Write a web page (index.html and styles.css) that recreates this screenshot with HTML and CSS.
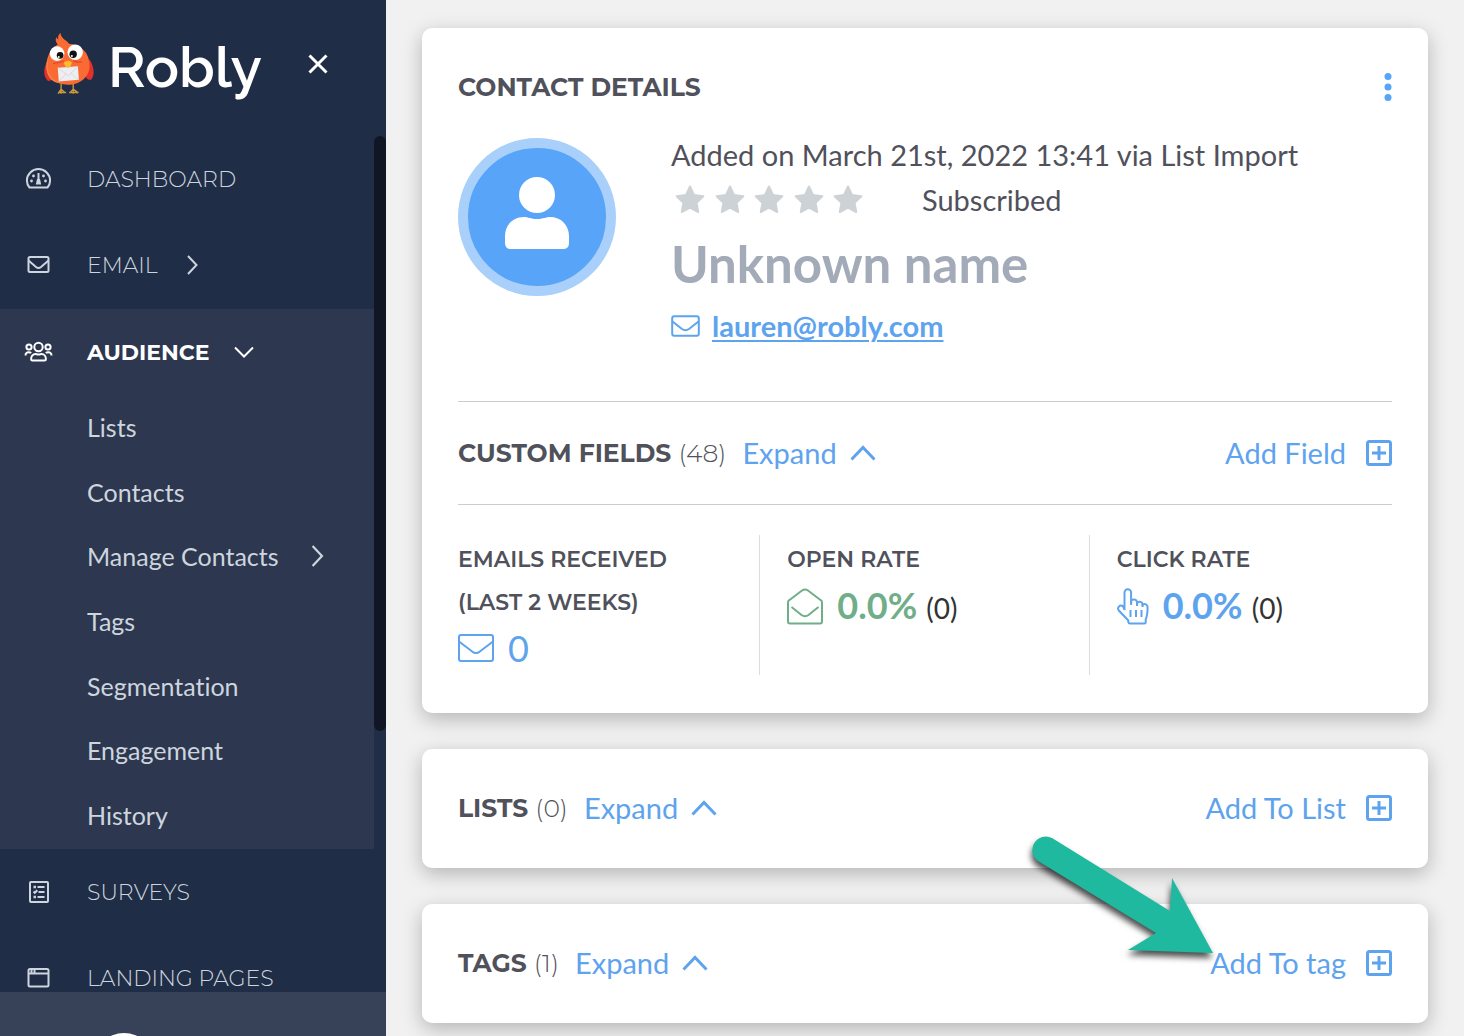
FILE: index.html
```html
<!DOCTYPE html>
<html lang="en">
  <head>
    <meta charset="UTF-8" />
    <meta name="viewport" content="width=device-width, initial-scale=1.0" />
    <title>Robly - Contact Details</title>
    <link rel="stylesheet" href="styles.css">
  </head>
  <body>
    <svg class="sprite" aria-hidden="true">
      <symbol id="chevron" viewBox="0 0 12 20">
        <path d="M2 1l8.500 9L2 19" />
      </symbol>
      <symbol id="chevron-up" viewBox="0 0 26 16">
        <path d="M1.500 14.500L13 2.500l11.500 12" />
      </symbol>
      <symbol id="plus-box" viewBox="0 0 26 26">
        <rect x="1.500" y="1.500" width="23" height="23" rx="2" />
        <path d="M13 6v14M6 13h14" />
      </symbol>
      <symbol id="star" viewBox="0 0 30 29">
        <path d="M15 1.500l4 8.500 9.300 1.300-6.700 6.500L23.200 27l-8.200-4.300L6.800 27l1.600-9.200-6.700-6.500L11 10z" />
      </symbol>
    </svg>

    <div class="page">
      <aside class="sidebar">
        <div class="sidebar-header">
          <a class="logo" href="#">
            <svg class="bird" viewBox="40 25 155 190" aria-hidden="true">
              <path d="M94 195v-16M85 205h24M94 195l-9 13M94 195v14M94 195l12 11M130 195v-16M118 205h28M130 195l-10 11M130 195v14M130 195l15 11" fill="none" stroke="#c99a3c" stroke-width="4" />
              <path d="M56 108c-14 18-18 46-2 62 8 2 16-4 20-14z" fill="#e0312b" />
              <path d="M178 106c14 20 18 46 5 61-9 2-16-6-18-16z" fill="#e0312b" />
              <path d="M118 60c-8-12-24-14-26-33-8 8-8 14-6 20-4-2-6-5-6-8-4 10-2 16 4 23-22 12-34 38-34 65 0 32 28 55 64 55s65-23 65-57c0-36-24-62-61-65z" fill="#f96b32" />
              <path d="M58 100c-8 28-6 62 36 78-28-2-44-22-44-50 0-12 3-20 8-28z" fill="#fb8046" />
              <circle cx="82" cy="89" r="22" fill="#fff" />
              <circle cx="136" cy="85" r="23" fill="#fff" />
              <circle cx="91" cy="94" r="10" fill="#111" />
              <circle cx="130" cy="91" r="11" fill="#111" />
              <circle cx="87" cy="99" r="3" fill="#fff" />
              <circle cx="126" cy="96" r="3" fill="#fff" />
              <path d="M70 118q18 0 32-7M130 111q14 6 26 2" fill="none" stroke="#e0482b" stroke-width="4" />
              <path d="M84 131l60-4 3 40-60 5z" fill="#eceef1" />
              <path d="M84 131l32 24 28-28M87 172l22-23M147 167l-25-20" fill="none" stroke="#cfd1d5" stroke-width="2" />
              <path d="M102 118c4-10 18-10 24-2-2 10-8 16-12 16s-9-7-12-14z" fill="#fcb932" />
            </svg>
            <span>Robly</span>
          </a>
          <button class="close" type="button" aria-label="Close menu">
            <svg width="20" height="20" viewBox="0 0 20 20"><path d="M1.500 1.500l17 17M18.500 1.500l-17 17" /></svg>
          </button>
        </div>

        <nav class="nav">
          <a class="nav-item" href="#">
            <svg class="nav-icon" viewBox="0 0 28 28">
              <path d="M5 22.500h18c1.800-2 2.600-4.500 2.600-7a11.600 11.400 0 0 0-23.200 0c0 2.500.8 5 2.600 7z" />
              <path d="M14 8v9" />
              <path class="fill" d="M12.500 14h3l1.200 5.500h-5.400z" />
              <g class="fill"><circle cx="9" cy="11" r="1.400" /><circle cx="19" cy="11" r="1.400" /><circle cx="7" cy="16" r="1.400" /><circle cx="21" cy="16" r="1.400" /></g>
            </svg>
            Dashboard
          </a>
          <a class="nav-item" href="#">
            <svg class="nav-icon" viewBox="0 0 28 28">
              <rect x="4" y="6" width="20" height="15" rx="1.500" />
              <path d="M4 9.500l7.500 6.500q2.500 2 5 0L24 9.500" />
            </svg>
            Email
            <svg class="chevron" width="12" height="20"><use href="#chevron" /></svg>
          </a>
          <div class="nav-group">
            <a class="nav-item active" href="#">
              <svg class="nav-icon" viewBox="0 0 28 28">
                <circle cx="14" cy="9" r="4.200" />
                <circle cx="4.500" cy="9" r="2.600" />
                <circle cx="23.500" cy="9" r="2.600" />
                <path d="M8 22.500h12c1.200 0 1.400-.6 1.400-1.500 0-3-2-5-4.400-5-1 0-1.500.5-3 .5s-2-.5-3-.5c-2.400 0-4.400 2-4.400 5 0 .9.200 1.500 1.400 1.500z" />
                <path d="M1 17.500c0-2 1.200-3.300 3.200-3.300 1 0 1.800.2 2.500.8M27 17.500c0-2-1.200-3.300-3.200-3.300-1 0-1.800.2-2.500.8" />
              </svg>
              Audience
              <svg class="chevron" width="20" height="12" viewBox="0 0 20 12"><path d="M1 1.500l9 9 9-9" /></svg>
            </a>
            <ul class="submenu">
              <li><a href="#">Lists</a></li>
              <li><a href="#">Contacts</a></li>
              <li>
                <a href="#">Manage Contacts <svg class="chevron" width="14" height="22"><use href="#chevron" /></svg></a>
              </li>
              <li><a href="#">Tags</a></li>
              <li><a href="#">Segmentation</a></li>
              <li><a href="#">Engagement</a></li>
              <li><a href="#">History</a></li>
            </ul>
          </div>
          <a class="nav-item" href="#">
            <svg class="nav-icon" viewBox="0 0 28 28">
              <rect x="5.500" y="4" width="18" height="20" rx="1" />
              <path d="M13 9h7M14 14h6M13 19h7M9 13.500l1.300 1.300 2.500-2.600" />
              <path class="fill" d="M9 7.800h2.500v2.500H9zM9 17.800h2.500v2.500H9z" />
            </svg>
            Surveys
          </a>
          <a class="nav-item" href="#">
            <svg class="nav-icon" viewBox="0 0 28 28">
              <rect x="4" y="5" width="20" height="17.500" rx="1.500" />
              <path d="M4 9.500h20M7 5v4M10 5v4" />
            </svg>
            Landing Pages
          </a>
          <div class="scroll-thumb"></div>
        </nav>

        <div class="sidebar-footer">
          <div class="user-circle"></div>
        </div>
      </aside>

      <main class="content">
        <section class="card details">
          <div class="card-header">
            <h2>Contact Details</h2>
            <button class="more" type="button" aria-label="More options">
              <svg width="8" height="28" viewBox="0 0 8 28"><circle cx="4" cy="3.500" r="3.500" /><circle cx="4" cy="14" r="3.500" /><circle cx="4" cy="24.500" r="3.500" /></svg>
            </button>
          </div>

          <div class="contact">
            <div class="avatar">
              <svg width="64" height="74" viewBox="0 0 64 74">
                <circle cx="32" cy="19" r="18" />
                <path d="M19 41c4 0 7 2 13 2s9-2 13-2c11 0 19 8 19 19v7q0 6-6 6H6q-6 0-6-6v-7c0-11 8-19 19-19z" />
              </svg>
            </div>
            <div class="contact-info">
              <p>Added on March 21st, 2022 13:41 via List Import</p>
              <div class="status">
                <span class="stars" role="img" aria-label="No rating">
                  <svg><use href="#star" /></svg>
                  <svg><use href="#star" /></svg>
                  <svg><use href="#star" /></svg>
                  <svg><use href="#star" /></svg>
                  <svg><use href="#star" /></svg>
                </span>
                <span>Subscribed</span>
              </div>
              <h1>Unknown name</h1>
              <div class="email">
                <svg width="29" height="22" viewBox="0 0 29 22">
                  <rect x="1.200" y="1.200" width="26.600" height="19.600" rx="2" />
                  <path d="M1.500 6.500l9.500 7.500q3.500 2.500 7 0l9.500-7.500" />
                </svg>
                <a href="mailto:lauren@robly.com">lauren@robly.com</a>
              </div>
            </div>
          </div>

          <div class="row fields">
            <h2>Custom Fields <small>(48)</small></h2>
            <button class="link" type="button">Expand <svg width="26" height="16"><use href="#chevron-up" /></svg></button>
            <button class="link add" type="button">Add Field <svg width="26" height="26"><use href="#plus-box" /></svg></button>
          </div>

          <div class="stats">
            <div class="stat">
              <h3>Emails Received<br>(Last 2 Weeks)</h3>
              <div class="value blue">
                <svg width="36" height="28" viewBox="0 0 36 28">
                  <rect x="1" y="1" width="34" height="26" rx="2" />
                  <path d="M1 7.500l13.500 10.300q3.500 2.200 7 0L35 7.500" />
                </svg>
                <span>0</span>
              </div>
            </div>
            <div class="stat">
              <h3>Open Rate</h3>
              <div class="value green">
                <svg width="36" height="37" viewBox="0 0 36 37">
                  <path d="M1 14.500v19q0 2 2 2h30q2 0 2-2v-19q0-1.500-1.200-2.300L21 2.500q-3-2-6 0L2.200 12.200Q1 13 1 14.500z" />
                  <path d="M4.500 19l10 8q3.500 2.500 7 0l10-8" />
                </svg>
                <span><strong>0.0%</strong> <small>(0)</small></span>
              </div>
            </div>
            <div class="stat">
              <h3>Click Rate</h3>
              <div class="value blue">
                <svg width="32" height="37" viewBox="0 0 32 37">
                  <path d="M7.500 22V4.500a3.300 3.300 0 0 1 6.600 0V15v-2c1.500-2.300 5.500-1.800 6 1v1c1.500-2 5-1.500 5.500 1v.8c2-1.500 5-.3 5 2.200 0 5-.4 9-1.900 12.500V34q0 1.500-1.500 1.500H13q-1.500 0-1.700-1.500v-1.500L1.800 22.500c-2-2.500.8-6.500 4.200-4.300z" />
                  <path d="M14.100 13v4M20.100 14v4M25.600 16v3M13.500 22v7M19 22v7M24.500 22v7" />
                </svg>
                <span><strong>0.0%</strong> <small>(0)</small></span>
              </div>
            </div>
          </div>
        </section>

        <section class="card row">
          <h2>Lists <small>(0)</small></h2>
          <button class="link" type="button">Expand <svg width="26" height="16"><use href="#chevron-up" /></svg></button>
          <button class="link add" type="button">Add To List <svg width="26" height="26"><use href="#plus-box" /></svg></button>
        </section>

        <section class="card row">
          <h2>Tags <small>(1)</small></h2>
          <button class="link" type="button">Expand <svg width="26" height="16"><use href="#chevron-up" /></svg></button>
          <button class="link add" type="button">Add To tag <svg width="26" height="26"><use href="#plus-box" /></svg></button>
          <svg class="arrow" width="200" height="140" viewBox="0 0 200 140" aria-hidden="true">
            <path d="M28 8l118 73 2-33 41 75-85-3 28-17L14 31A13.500 13.500 0 0 1 28 8z" />
          </svg>
        </section>
      </main>
    </div>
  </body>
</html>
```
FILE: styles.css
```css
* {
  box-sizing: border-box;
}
body {
  margin: 0;
  font-family: Lato, "Liberation Sans", sans-serif;
  font-size: 29px;
  font-variant-ligatures: none;
  color: #50515b;
  background: #f1f1f1;
}
h1,
h2,
h3,
p,
ul {
  margin: 0;
  padding: 0;
}
button {
  padding: 0;
  border: 0;
  background: none;
  font: inherit;
  cursor: pointer;
}
a {
  color: inherit;
  text-decoration: none;
}
svg {
  display: block;
  flex: none;
  fill: none;
  stroke: currentColor;
  stroke-width: 2;
}
.sprite {
  position: absolute;
  width: 0;
  height: 0;
}
.page {
  display: flex;
  height: 100vh;
  overflow: hidden;
}

/* sidebar */
.sidebar {
  display: flex;
  flex-direction: column;
  flex: none;
  width: 386px;
  background: #202d46;
  color: #cdd5de;
}
.sidebar-header {
  display: flex;
  align-items: center;
  flex: none;
  height: 136px;
  padding: 0 58px 8px 43px;
  color: #fff;
}
.logo {
  display: flex;
  align-items: center;
  gap: 13px;
  font-family: Raleway, Lato, sans-serif;
  font-size: 57px;
  font-weight: 600;
  line-height: 68px;
}
.logo span {
  padding-top: 6px;
}
.bird {
  width: 52px;
  height: 64px;
  stroke: none;
}
.close {
  margin-left: auto;
  color: #fff;
}
.close svg {
  stroke-width: 3;
}
.nav {
  position: relative;
  flex: 1;
  min-height: 0;
  padding-right: 12px;
  overflow: hidden;
}
.nav-item {
  display: flex;
  align-items: center;
  height: 86px;
  padding-left: 24px;
  font-family: Montserrat, Inter, sans-serif;
  font-size: 22px;
  font-weight: 300;
  text-transform: uppercase;
}
.nav-icon {
  width: 29px;
  height: 28px;
  margin-right: 34px;
}
.fill {
  fill: currentColor;
  stroke: none;
}
.chevron {
  margin-left: 28px;
}
.nav-group {
  margin-top: 1px;
  background: #2d3850;
}
.nav-item.active {
  color: #fff;
  font-weight: 700;
}
.nav-item.active .chevron {
  margin-left: 25px;
}
.submenu {
  display: grid;
  grid-auto-rows: 1fr;
  height: 454px;
  padding: 0 0 2px 87px;
  font-size: 25px;
  list-style: none;
}
.submenu a {
  display: flex;
  align-items: center;
  height: 100%;
}
.submenu .chevron {
  margin-left: 31px;
}
.scroll-thumb {
  position: absolute;
  top: 0;
  right: 0;
  width: 12px;
  height: 595px;
  border-radius: 6px;
  background: #101623;
}
.sidebar-footer {
  flex: none;
  height: 44px;
  padding: 41px 0 0 94px;
  background: #374259;
  overflow: hidden;
}
.user-circle {
  width: 60px;
  height: 60px;
  border-radius: 50%;
  background: #fff;
}

/* content */
.content {
  display: flex;
  flex-direction: column;
  flex: 1;
  gap: 36px;
  padding: 28px 36px;
}
.card {
  position: relative;
  flex: none;
  padding: 36px 36px 37px;
  border-radius: 10px;
  background: #fff;
  box-shadow: 0 6px 20px rgba(0, 0, 0, 0.25);
}
.details {
  padding-bottom: 38px;
}
.card-header {
  display: flex;
  justify-content: space-between;
  align-items: center;
  height: 46px;
}
h2 {
  font-family: Montserrat, Inter, sans-serif;
  font-size: 25px;
  font-weight: 700;
  line-height: 46px;
  text-transform: uppercase;
}
h2 small {
  font-size: 25px;
  font-weight: 300;
}
.more {
  color: #58a4f8;
}
.more svg {
  fill: currentColor;
  stroke: none;
}
.contact {
  display: flex;
  gap: 55px;
  height: 291px;
  padding-top: 22px;
}
.avatar {
  display: flex;
  justify-content: center;
  flex: none;
  width: 158px;
  height: 158px;
  margin-top: 6px;
  padding-top: 28px;
  border: 10px solid #a9d0fb;
  border-radius: 50%;
  background: #58a4f8;
}
.avatar svg {
  fill: #fff;
  stroke: none;
}
.contact-info {
  line-height: 45px;
}
.status {
  display: flex;
  gap: 59px;
}
.stars {
  display: flex;
  justify-content: space-between;
  align-items: center;
  width: 188px;
  margin-left: 4px;
}
.stars svg {
  width: 30px;
  height: 29px;
  fill: #cdd2d6;
  stroke: #cdd2d6;
  stroke-linejoin: round;
}
h1 {
  color: #a4abb8;
  font-size: 51px;
  font-weight: 700;
  line-height: 84px;
}
.email {
  display: flex;
  align-items: center;
  gap: 12px;
  color: #5ea3ee;
  font-weight: 700;
  line-height: 40px;
}
.email a {
  text-decoration: underline;
  text-decoration-thickness: 2px;
  text-underline-offset: 3px;
}
.row {
  display: flex;
  align-items: center;
}
.fields {
  height: 104px;
  border-top: 1px solid #ccc;
  border-bottom: 1px solid #ccc;
}
.link {
  display: flex;
  align-items: center;
  gap: 13px;
  margin-left: 16px;
  color: #5ea3ee;
  line-height: 46px;
}
.link svg {
  stroke-width: 3;
}
.add {
  gap: 20px;
  margin-left: auto;
}
.stats {
  display: grid;
  grid-template-columns: repeat(3, 1fr);
  margin: 30px -26px 0 -28px;
}
.stat {
  min-height: 140px;
  padding: 3px 27px 0;
  border-left: 1px solid #ddd;
}
.stat:first-child {
  border-color: transparent;
}
h3 {
  font-family: Montserrat, Inter, sans-serif;
  font-size: 22px;
  font-weight: 600;
  line-height: 43px;
  text-transform: uppercase;
}
.value {
  display: flex;
  align-items: center;
  font-size: 36px;
  line-height: 48px;
}
.value svg {
  margin-right: 14px;
}
.value small {
  color: #333;
  font-size: 28px;
}
.blue {
  color: #5ea3ee;
}
.green {
  color: #6fae88;
}
.arrow {
  position: absolute;
  top: -74px;
  right: 204px;
  fill: #1fb99f;
  stroke: none;
  filter: drop-shadow(-1px 5px 3px rgba(0, 0, 0, 0.7));
  pointer-events: none;
}
```
